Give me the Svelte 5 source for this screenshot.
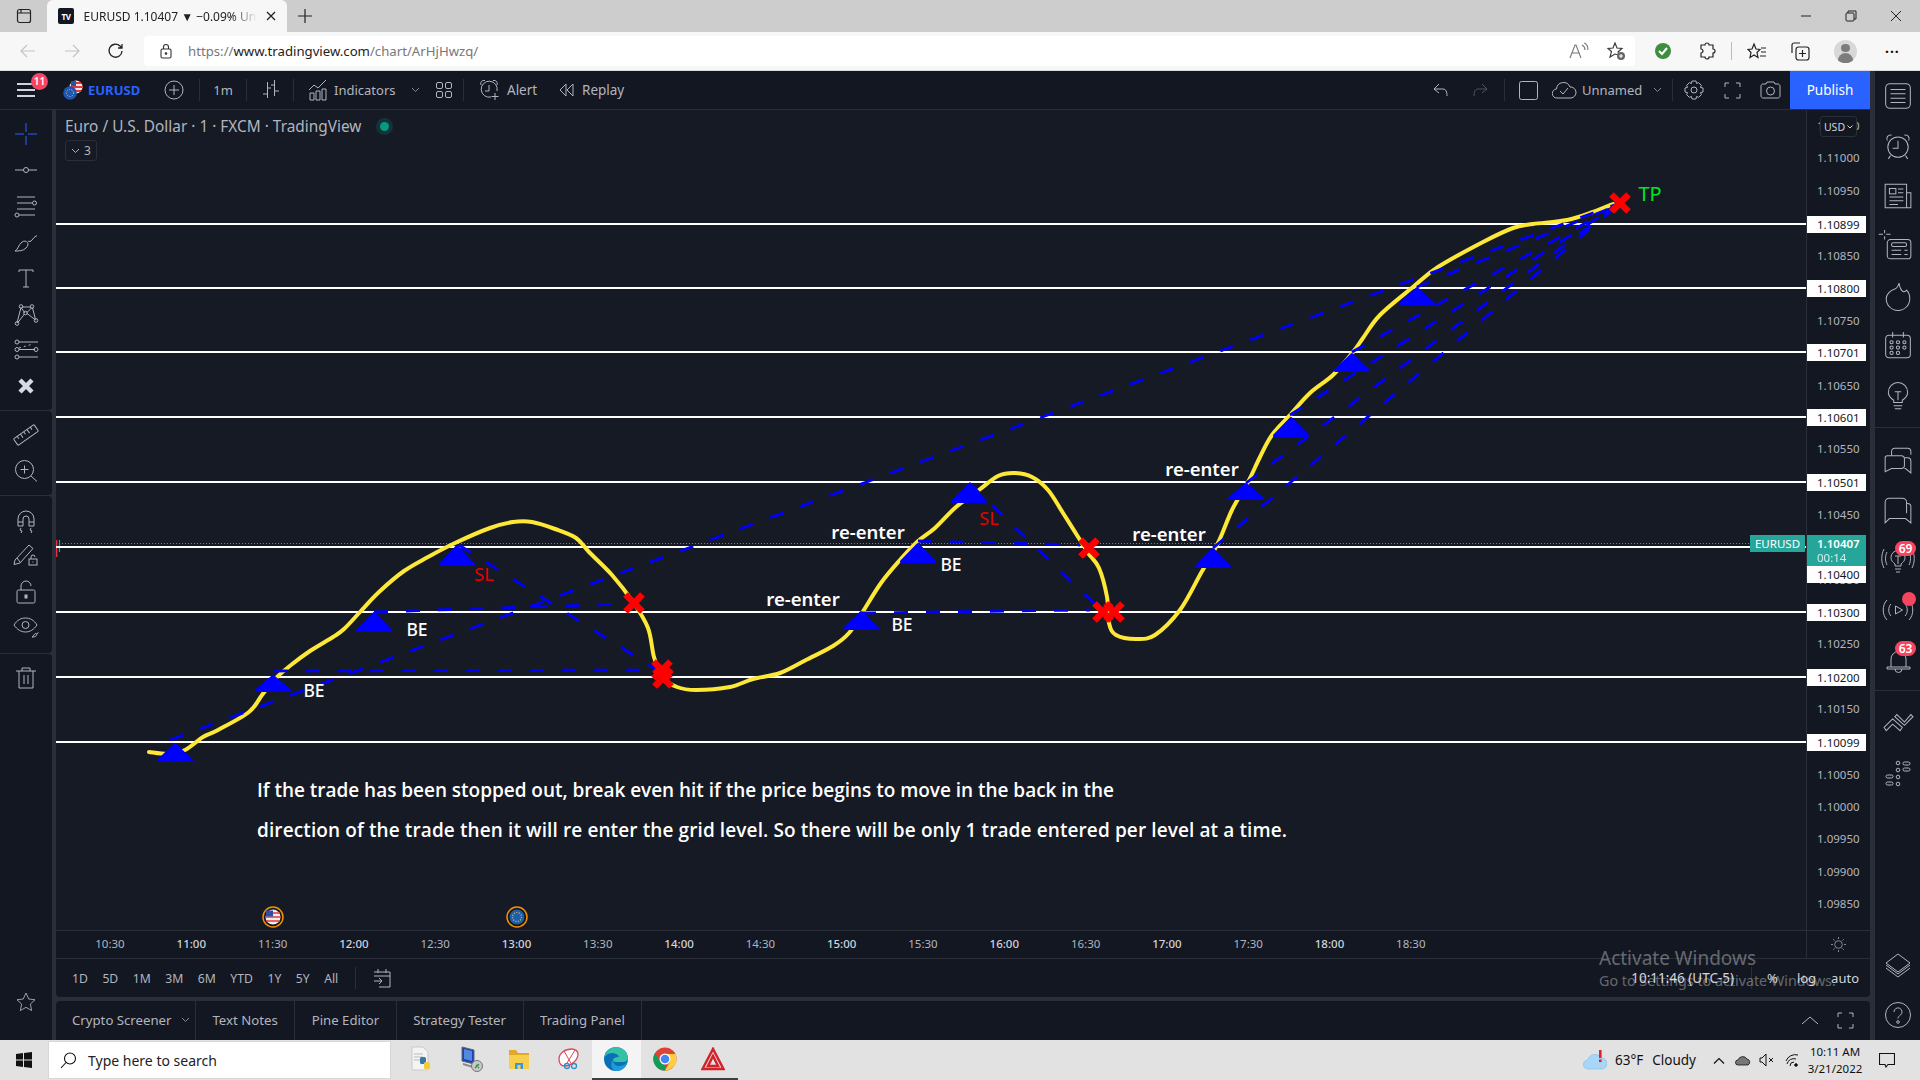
<script>
  const grid = [224, 288, 352, 417, 482, 547, 612, 677, 742];
  const yellow = [[149,752],[168,754],[185,750],[203,737],[218,730],[249,712],[262,695],[274,680],[291,665],[310,651],[333,637],[344,629],[360,612],[379,592],[404,571],[428,557],[455,543],[490,528],[513,522],[532,522],[555,529],[576,538],[589,552],[612,575],[633,602],[648,628],[654,657],[662,677],[677,687],[696,690],[730,687],[753,679],[780,673],[806,660],[833,646],[849,633],[862,613],[881,583],[900,560],[917,542],[935,528],[956,507],[979,490],[998,476],[1015,473],[1032,477],[1048,490],[1063,513],[1080,540],[1088,553],[1099,568],[1107,597],[1109,623],[1116,635],[1136,639],[1155,635],[1180,610],[1201,573],[1218,543],[1232,510],[1248,482],[1260,457],[1272,435],[1290,415],[1310,393],[1333,375],[1353,352],[1363,338],[1380,315],[1413,287],[1438,267],[1483,242],[1513,228],[1533,224],[1567,220],[1593,212],[1613,204]];
  function smooth(p) {
    let d = `M${p[0][0]} ${p[0][1]}`;
    for (let i = 0; i < p.length - 1; i++) {
      const a = p[Math.max(i - 1, 0)], b = p[i], c = p[i + 1], e = p[Math.min(i + 2, p.length - 1)];
      const c1 = [b[0] + (c[0] - a[0]) / 6, b[1] + (c[1] - a[1]) / 6];
      const c2 = [c[0] - (e[0] - b[0]) / 6, c[1] - (e[1] - b[1]) / 6];
      d += `C${c1[0].toFixed(1)} ${c1[1].toFixed(1)} ${c2[0].toFixed(1)} ${c2[1].toFixed(1)} ${c[0]} ${c[1]}`;
    }
    return d;
  }
  const yellowPath = smooth(yellow);
  const dashes = [
    [170,740,1620,203],[274,671,654,670],[374,612,624,604],[459,545,660,672],
    [862,613,1090,610],[918,541,1080,545],[969,483,1103,612],
    [1213,548,1618,205],[1246,483,1618,205],[1290,415,1618,205],[1352,352,1618,205],[1417,287,1618,205]
  ];
  const triangles = [[175,743,762],[273,675,692],[374,612,632],[457,545,566],[861,611,630],[918,543,563],[969,483,503],[1213,548,568],[1246,483,500],[1291,417,437],[1352,353,372],[1417,287,305]];
  const crosses = [[634,603],[662,670],[663,678],[1089,548],[1103,612],[1114,612],[1620,203]];
  const notes = [
    ['BE',417,636,'be'],['BE',314,697,'be'],['BE',951,571,'be'],['BE',902,631,'be'],
    ['SL',484,581,'sl'],['SL',989,525,'sl'],['TP',1650,201,'tp'],
    ['re-enter',868,539,'re'],['re-enter',803,606,'re'],['re-enter',1169,541,'re'],['re-enter',1202,476,'re']
  ];
  const ticks = [['1.11050',126],['1.11000',158],['1.10950',191],['1.10850',256],['1.10750',321],['1.10650',386],['1.10550',449],['1.10450',515],['1.10350',580],['1.10250',644],['1.10150',709],['1.10050',775],['1.10000',807],['1.09950',839],['1.09900',872],['1.09850',904]];
  const levels = [['1.10899',224],['1.10800',288],['1.10701',352],['1.10601',417],['1.10501',482],['1.10400',574],['1.10300',612],['1.10200',677],['1.10099',742]];
  const times = ['10:30','11:00','11:30','12:00','12:30','13:00','13:30','14:00','14:30','15:00','15:30','16:00','16:30','17:00','17:30','18:00','18:30'];
  const ranges = ['1D','5D','1M','3M','6M','YTD','1Y','5Y','All'];

  const left1 = {
    cross:'<path stroke="#2962ff" d="M14 3v9M14 16v9M3 14h9M16 14h9"/>',
    line:'<path d="M3 14h8.500M16.500 14h8.500"/><circle cx="14" cy="14" r="2.500"/>',
    fib:'<path d="M5 5h18M5 11h15M5 17h18M7 23h16"/><circle cx="22.500" cy="11" r="2"/><circle cx="5" cy="23" r="2"/>',
    brush:'<path d="M3 23c3-1 3-6 7-9 2-1.500 4.500-1 5.500.5 1 1.500.5 3.500-1.500 5.500-3 3-7 3-11 3z"/><path d="M16 13c1 1 3 .5 4-1l2-2.500 3-2"/>',
    text:'<path d="M7 8V6h14v2M14 6v17M11 23h6"/>',
    pattern:'<path d="M5 23L9 7.500M10 7h9M5.500 23l7-9M9 7.500l4 5.500M14.500 13l9 7M15 12.500l5-5M20.500 8l3 11.500"/><circle cx="9" cy="6.500" r="1.800"/><circle cx="20" cy="6.500" r="1.800"/><circle cx="13.500" cy="13" r="1.800"/><circle cx="24" cy="20.500" r="1.800"/><circle cx="5" cy="23.500" r="1.800"/>',
    pred:'<path d="M7 6h19M7 21h19M7 13.500h16" /><path stroke-dasharray="2 3" d="M7 12l14-4"/><circle cx="5" cy="6" r="2"/><circle cx="5" cy="13.500" r="2"/><circle cx="5" cy="21" r="2"/><circle cx="24" cy="13.500" r="2"/>',
    x:'<path stroke="#d7dae2" stroke-width="4.500" d="M8 8l12 12M20 8L8 20"/>',
    ruler:'<g transform="rotate(-35 14 14)"><rect x="1.500" y="10" width="25" height="8" rx="1"/><path d="M6 10v3M10 10v4.500M14 10v3M18 10v4.500M22 10v3"/></g>',
    zoom:'<circle cx="12.500" cy="12.500" r="9"/><path d="M12.500 8.500v8M8.500 12.500h8M19 19l6 5.500"/>',
    magnet:'<path d="M6 19V12a8 8 0 0 1 16 0v7h-5v-7a3 3 0 0 0-6 0v7zM6 15h5M17 15h5M9 21l-1 2 2 1-1 2M19 21l-1 2 2 1-1 2"/>',
    pencil:'<path d="M3 20L17 5l4 3.500L8 23l-6 1.500z"/><path d="M5 18l3 4"/><rect x="17" y="19" width="8" height="6"/><path d="M19 19v-2a2 2 0 0 1 4 0"/><path d="M21 21.500v1"/>',
    lock:'<rect x="5" y="12" width="18" height="13" rx="1.500"/><path d="M9 12V8a5 5 0 0 1 10 0"/><rect x="13" y="17" width="2" height="3" fill="#b2b5be"/>',
    eye:'<path d="M2 11C5 6 9 4 13.500 4S22 6 25 11c-3 4.500-7 7-11.500 7S5 15.500 2 11z"/><circle cx="13.500" cy="11" r="3.500"/><path d="M20 23c2-1 2-3 3.500-3.500s1.500 1.500.5 2.500-2.500 1-4 1zM24.500 20l2-1.500"/>',
    trash:'<path d="M4 8h20M10 8V5h8v3M7 8v17h14V8M12 12v9M16 12v9"/>',
    star:'<path d="M14 3.500l3.200 7 7.300.9-5.400 5 1.500 7.600-6.600-3.800-6.600 3.800 1.500-7.600-5.400-5 7.300-.9z"/>'
  };
  const right = {
    list:'<rect x="2.500" y="2.500" width="23" height="23" rx="4"/><path d="M7 8h14M7 12h14M7 16h14M7 20h14"/>',
    alarm:'<circle cx="14" cy="15" r="9.500"/><path d="M14 9v7H9M4 9c-1.500-3 1-6 4-5M24 9c1.500-3-1-6-4-5M7 23l-2 3M21 23l2 3"/>',
    news:'<path d="M2 3h20v22H2zM22 11h4v14h-4"/><rect x="6" y="7" width="6" height="5"/><path d="M14 7.500h5M14 11h5M6 15h13M6 18.500h13M6 22h8"/>',
    watch:'<rect x="4" y="8" width="22" height="18" rx="3"/><rect x="8" y="11" width="14" height="3.500" rx="1.500"/><path d="M8 18h9M20 18h3M8 22h9M20 22h3M-4 3h4M3 3h4M1.500 -1v3M1.500 5v3"/>',
    flame:'<path d="M15 2c-1 3-2 5-4 5.500C6 9 3 13 3 16.500a11 11 0 0 0 22 0c0-3-1-6-3-8-1 1-2 2-3 1.500-2-1-3.500-4-4-8z"/>',
    cal:'<rect x="2.500" y="4" width="23" height="21" rx="3"/><path d="M9 1v5M19 1v5"/><circle cx="8" cy="10.500" r="1.500"/><circle cx="14" cy="10.500" r="1.500"/><circle cx="20" cy="10.500" r="1.500"/><circle cx="8" cy="15.500" r="1.500"/><circle cx="14" cy="15.500" r="1.500"/><circle cx="20" cy="15.500" r="1.500"/><circle cx="8" cy="20.500" r="1.500"/><circle cx="14" cy="20.500" r="1.500"/>',
    bulb:'<path d="M10 20v-2c-3-2-5-4-5-7.500a9 9 0 0 1 18 0c0 3.500-2 5.500-5 7.500v2zM10 23h8M11 26h6M11 10h6M14 10v8"/>',
    chats:'<path d="M4 10h13a3 3 0 0 1 3 3v6a3 3 0 0 1-3 3H8l-6 3V12a2 2 0 0 1 2-2z"/><path d="M8 10V6a3 3 0 0 1 3-3h12a3 3 0 0 1 3 3v3M20 12h3a3 3 0 0 1 3 3v11l-5-4h-1"/>',
    chat:'<path d="M6 3h12a4 4 0 0 1 4 4v1h1a3 3 0 0 1 3 3v15l-5-4H6L2 26V7a4 4 0 0 1 4-4zM22 8v9"/>',
    bulbw:'<path d="M11 20v-2c-2-2-4-3-4-6.500a7 7 0 0 1 14 0c0 3.500-2 4.500-4 6.500v2zM11 23h6M12 26h4M11 10h6M14 10v8M3 6c-2 4-2 9 0 13M0 3c-3 6-3 13 0 19M25 6c2 4 2 9 0 13M28 3c3 6 3 13 0 19"/>',
    play:'<path d="M11.500 10v8l7-4zM7 8c-3 3-3 9 0 12M21 8c3 3 3 9 0 12M3 4c-5 5-5 15 0 20M25 4c5 5 5 15 0 20"/>',
    bell:'<path d="M7 21v-8a7.500 7.500 0 0 1 15 0v8M3 21h23v2H3zM11 23a3 3 0 0 0 7 0"/>',
    vee:'<path d="M1 20L9 12l9 8-2 3-7-6-6 6zM13 8l7 7 6-7 2 2-8 8-9-8z"/>',
    dots:'<rect x="19" y="3" width="7" height="3" rx="1.500"/><rect x="19" y="9" width="7" height="3" rx="1.500"/><circle cx="14" cy="4" r="1.800"/><circle cx="14" cy="11" r="1.800"/><circle cx="14" cy="18" r="1.800"/><circle cx="14" cy="25" r="1.800"/><rect x="2" y="16" width="7" height="3" rx="1.500"/><rect x="2" y="23" width="7" height="3" rx="1.500"/>',
    layers:'<path d="M14 3l12 9-12 9-12-9zM2 17l12 9 12-9M2 14l12 9 12-9"/>',
    help:'<circle cx="14" cy="14" r="12.500"/><path d="M10 11a4 4 0 1 1 6.500 3c-1.500 1-2.500 2-2.500 3.500"/><circle cx="14" cy="21" r="1.300"/>'
  };
  const toolsA = ['cross','line','fib','brush','text','pattern','pred','x'];
  const toolsB = ['ruler','zoom'];
  const toolsC = ['magnet','pencil','lock','eye'];
  const railA = ['list','alarm','news','watch','flame','cal','bulb'];
</script>

<div class="app">
  <div class="tabstrip">
    <svg class="strip-ic" width="16" height="16" viewBox="0 0 16 16" fill="none" stroke="#222" stroke-width="1.200"><rect x="1.500" y="1.500" width="13" height="13" rx="2"/><path d="M1.500 5h13M5 1.500V5" /></svg>
    <div class="tab">
      <div class="favicon">TV</div>
      <div class="tabtitle">EURUSD 1.10407 ▼ −0.09% Unnamed</div>
      <svg width="10" height="10" viewBox="0 0 10 10" stroke="#222" stroke-width="1.300"><path d="M1 1l8 8M9 1l-8 8"/></svg>
    </div>
    <svg class="newtab" width="14" height="14" viewBox="0 0 14 14" stroke="#222" stroke-width="1.200"><path d="M7 0v14M0 7h14"/></svg>
    <div class="winctl">
      <svg width="12" height="12" viewBox="0 0 12 12" stroke="#222"><path d="M1 6h10"/></svg>
      <svg width="12" height="12" viewBox="0 0 12 12" stroke="#222" fill="none"><rect x="1" y="3" width="8" height="8" rx="1"/><path d="M3 3V1h8v8H9"/></svg>
      <svg width="12" height="12" viewBox="0 0 12 12" stroke="#222"><path d="M1 1l10 10M11 1L1 11"/></svg>
    </div>
  </div>

  <div class="addressbar">
    <div class="navs">
      <svg width="18" height="18" viewBox="0 0 18 18" fill="none" stroke="#c4c4c4" stroke-width="1.200"><path d="M16 9H2M8 3L2 9l6 6"/></svg>
      <svg width="18" height="18" viewBox="0 0 18 18" fill="none" stroke="#c4c4c4" stroke-width="1.200"><path d="M2 9h14M10 3l6 6-6 6"/></svg>
      <svg width="18" height="18" viewBox="0 0 18 18" fill="none" stroke="#222" stroke-width="1.300"><path d="M15 9a6.500 6.500 0 1 1-2-5l2 2M15 2v4h-4"/></svg>
    </div>
    <div class="urlbox">
      <svg width="14" height="16" viewBox="0 0 14 16" fill="none" stroke="#333" stroke-width="1.100"><rect x="2" y="6" width="10" height="9" rx="1.500"/><path d="M4.500 6V4a2.500 2.500 0 0 1 5 0v2"/><circle cx="7" cy="10.500" r=".8" fill="#333"/></svg>
      <div class="url"><span class="dim">https://</span>www.tradingview.com<span class="dim">/chart/ArHjHwzq/</span></div>
      <div class="urlend">
        <svg width="20" height="18" viewBox="0 0 20 18" fill="none" stroke="#777" stroke-width="1.100"><path d="M1 16L6 3h1l5 13M3 11h7M13 3c2 1 3 3 3 5M15 1c3 1 4 4 4 7"/></svg>
        <svg width="20" height="20" viewBox="0 0 20 20" fill="none" stroke="#333" stroke-width="1.100"><path d="M9 2l2 5 5 .5-4 3.500 1 3-4-1-5 3 1.500-5.500L2 7.500 7 7z"/><circle cx="15" cy="15" r="4" fill="#666" stroke="none"/><path d="M15 13v4M13 15h4" stroke="#fff"/></svg>
      </div>
    </div>
    <div class="browser-ext">
      <svg width="18" height="18" viewBox="0 0 18 18"><circle cx="9" cy="9" r="8" fill="#3e8e41"/><path d="M5 9l3 3 5-6" fill="none" stroke="#fff" stroke-width="2"/></svg>
      <svg class="puzzle" width="18" height="18" viewBox="0 0 18 18" fill="none" stroke="#222" stroke-width="1.200"><path d="M7 3a2 2 0 0 1 4 0h4v4a2 2 0 0 1 0 4v4h-4a2 2 0 0 1-4 0H3v-4a2 2 0 0 0 0-4V3z"/></svg>
      <div class="extsep"></div>
      <svg class="favs" width="20" height="18" viewBox="0 0 20 18" fill="none" stroke="#222" stroke-width="1.200"><path d="M7 2l2 5 4 .5-3 3 1 5-4-2.500L3 15.500l1-5-3-3L5 7zM14 6h5M14 10h5M13 14h6"/></svg>
      <svg class="coll" width="20" height="20" viewBox="0 0 20 20" fill="none" stroke="#222" stroke-width="1.200"><path d="M2 12V4c0-1 1-2 2-2h6"/><rect x="6" y="6" width="13" height="13" rx="2.500"/><path d="M12.500 9v7M9 12.500h7"/></svg>
      <div class="avatar"><div class="head"></div><div class="torso"></div></div>
      <div class="ell">···</div>
    </div>
  </div>

  <div class="body">
    <div class="workspace">
      <header class="tvhead">
        <div class="menu">
          <svg width="18" height="14" viewBox="0 0 18 14" stroke="#d1d4dc" stroke-width="2"><path d="M0 1h18M0 7h18M0 13h18"/></svg>
          <span class="bdg menu-bdg">11</span>
        </div>
        <div class="symbol">
          <svg width="20" height="22" viewBox="0 0 20 22">
            <circle cx="13" cy="8" r="6.500" fill="#e8e8ee"/><path d="M8 3h10v2H8zM7 7h13v2H7zM8 11h10v2H8z" fill="#e53935"/><rect x="8" y="2" width="5" height="5" fill="#1e56b0"/>
            <circle cx="7" cy="14" r="6.800" fill="#1e56b0"/><circle cx="7" cy="14" r="3.500" fill="none" stroke="#f7d038" stroke-dasharray="1 1.500"/>
          </svg>
          <span>EURUSD</span>
        </div>
        <div class="tool t-plus"><svg width="20" height="20" viewBox="0 0 20 20" fill="none" stroke="#b2b5be"><circle cx="10" cy="10" r="9"/><path d="M10 5v10M5 10h10"/></svg></div>
        <div class="sep"></div>
        <div class="tool t-1m">1m</div>
        <div class="sep"></div>
        <div class="tool t-candle"><svg width="18" height="22" viewBox="0 0 18 22" fill="none" stroke="#b2b5be"><path d="M5.500 3v16M1 15h4.500M5.500 9H9M12.500 1v16M9 6h3.500M12.500 12H17"/></svg></div>
        <div class="sep"></div>
        <div class="tool t-ind">
          <svg width="20" height="22" viewBox="0 0 20 22" fill="none" stroke="#b2b5be"><path d="M1 11l5-5 4 3 8-8M2 14h4v7H2zM8 12h4v9H8zM14 10h4v11h-4z"/></svg>
          <span>Indicators</span>
          <svg class="chev" width="9" height="6" viewBox="0 0 9 6" fill="none" stroke="#868993"><path d="M1 1l3.500 3.500L8 1"/></svg>
        </div>
        <div class="tool t-grid"><svg width="16" height="16" viewBox="0 0 16 16" fill="none" stroke="#b2b5be"><rect x=".5" y=".5" width="6" height="6" rx="1.500"/><rect x="9.500" y=".5" width="6" height="6" rx="1.500"/><rect x=".5" y="9.500" width="6" height="6" rx="1.500"/><rect x="9.500" y="9.500" width="6" height="6" rx="1.500"/></svg></div>
        <div class="sep"></div>
        <div class="tool t-alert">
          <svg width="20" height="22" viewBox="0 0 20 22" fill="none" stroke="#b2b5be"><path d="M11 18a8 8 0 1 1 6-6M9 6v6H5M1 6c-1-3 1-5 4-4.500M13 1.500c3-.5 5 1.500 4 4.500M15 14v7M11.500 17.500h7"/></svg>
          <span>Alert</span>
        </div>
        <div class="tool t-replay">
          <svg width="16" height="14" viewBox="0 0 16 14" fill="none" stroke="#b2b5be"><path d="M7 1L1 7l6 6zM14 1L8 7l6 6z"/></svg>
          <span>Replay</span>
        </div>
        <div class="headright">
          <div class="tool t-40"><svg width="16" height="14" viewBox="0 0 16 14" fill="none" stroke="#b2b5be"><path d="M6 1L1 6l5 4M1 6h9c3 0 4 3 4 7"/></svg></div>
          <div class="tool t-40 t-redo"><svg width="16" height="14" viewBox="0 0 16 14" fill="none" stroke="#50535e"><path d="M10 1l5 5-5 4M15 6H6C3 6 2 9 2 13"/></svg></div>
          <div class="sep"></div>
          <div class="tool t-sq"><svg width="19" height="19" viewBox="0 0 19 19" fill="none" stroke="#b2b5be"><rect x=".5" y=".5" width="18" height="18" rx="2"/></svg></div>
          <div class="tool t-unnamed">
            <svg width="25" height="18" viewBox="0 0 25 18" fill="none" stroke="#b2b5be"><path d="M6 17H5a4.500 4.500 0 0 1-.5-9A7 7 0 0 1 18 6a5.500 5.500 0 0 1 1 11zM8 10l3 3 5-6"/></svg>
            <span>Unnamed</span>
            <svg class="chev" width="9" height="6" viewBox="0 0 9 6" fill="none" stroke="#868993"><path d="M1 1l3.500 3.500L8 1"/></svg>
          </div>
          <div class="sep"></div>
          <div class="tool t-gear"><svg width="20" height="20" viewBox="0 0 20 20" fill="none" stroke="#b2b5be"><path d="M8 1h4l.6 2.500 2-.9 2.800 2.800-1 2 2.600.6v4l-2.600.6 1 2-2.800 2.800-2-1L12 19H8l-.6-2.600-2 1-2.800-2.800 1-2L1 12V8l2.600-.6-1-2 2.800-2.800 2 .9z"/><circle cx="10" cy="10" r="3"/></svg></div>
          <div class="tool t-full"><svg width="17" height="17" viewBox="0 0 17 17" fill="none" stroke="#b2b5be"><path d="M1 5V1h4M12 1h4v4M16 12v4h-4M5 16H1v-4"/></svg></div>
          <div class="tool t-40"><svg width="21" height="18" viewBox="0 0 21 18" fill="none" stroke="#b2b5be"><path d="M1 5c0-1 1-2 2-2h3l1-2h7l1 2h3c1 0 2 1 2 2v10c0 1-1 2-2 2H3c-1 0-2-1-2-2z"/><circle cx="10.500" cy="10" r="4"/></svg></div>
          <button class="publish">Publish</button>
        </div>
      </header>

      <div class="lower">
        <nav class="lefttools">
          <div class="group">
            {#each toolsA as k}<div class="lt"><svg width="28" height="28" viewBox="0 0 28 28" fill="none" stroke="#b2b5be" stroke-width="1">{@html left1[k]}</svg></div>{/each}
          </div>
          <div class="group">
            {#each toolsB as k}<div class="lt"><svg width="28" height="28" viewBox="0 0 28 28" fill="none" stroke="#b2b5be" stroke-width="1">{@html left1[k]}</svg></div>{/each}
          </div>
          <div class="group">
            {#each toolsC as k}<div class="lt" class:raised={k === 'pencil'}><svg width="28" height="28" viewBox="0 0 28 28" fill="none" stroke="#b2b5be" stroke-width="1">{@html left1[k]}</svg></div>{/each}
          </div>
          <div class="group last">
            <div class="lt"><svg width="28" height="28" viewBox="0 0 28 28" fill="none" stroke="#b2b5be" stroke-width="1">{@html left1.trash}</svg></div>
          </div>
          <div class="lt star"><svg width="24" height="24" viewBox="0 0 28 28" fill="none" stroke="#b2b5be" stroke-width="1">{@html left1.star}</svg></div>
        </nav>

        <div class="center">
          <section class="chartcard">
            <div class="plotrow">
              <div class="plot">
                <svg class="chartsvg" width="1750" height="820" viewBox="56 110 1750 820">
                  <path d="M56 543.500H1751" stroke="#26a69a" stroke-dasharray="1 2" fill="none"/>
                  <path d="M56.700 540v17" stroke="#f23645" stroke-width="1.200"/>
                  <path d="M59.500 540v12" stroke="#26a69a" stroke-width="1.200"/>
                  {#each grid as y}<line x1="56" x2="1806" y1={y} y2={y} stroke="#fff" stroke-width="2"/>{/each}
                  <path d={yellowPath} fill="none" stroke="#fde838" stroke-width="4" stroke-linecap="round"/>
                  {#each dashes as d}<line x1={d[0]} y1={d[1]} x2={d[2]} y2={d[3]} stroke="#0000ff" stroke-width="2.800" stroke-dasharray="14 18"/>{/each}
                  {#each triangles as t}<polygon points="{t[0]},{t[1]+1.5} {t[0]+16.500},{t[2]-1.500} {t[0]-16.500},{t[2]-1.500}" fill="#0000ff" stroke="#0000ff" stroke-width="3" stroke-linejoin="round"/>{/each}
                  {#each crosses as c}<path d="M{c[0]-8.500} {c[1]-8.500}L{c[0]+8.500} {c[1]+8.500}M{c[0]+8.500} {c[1]-8.500}L{c[0]-8.500} {c[1]+8.500}" stroke="#ff0000" stroke-width="6.500"/>{/each}
                  {#each notes as n}<text x={n[1]} y={n[2]} text-anchor="middle" class="note {n[3]}">{n[0]}</text>{/each}
                  <text x="257" y="797" class="para" textLength="857">If the trade has been stopped out, break even hit if the price begins to move in the back in the</text>
                  <text x="257" y="837" class="para" textLength="1030">direction of the trade then it will re enter the grid level. So there will be only 1 trade entered per level at a time.</text>
                  <g>
                    <circle cx="273" cy="917" r="10" fill="#131722" stroke="#f59000" stroke-width="1.500"/>
                    <circle cx="273" cy="917" r="7.500" fill="#eee"/>
                    <path d="M266 913h14M265.500 917h15M266 921h14" stroke="#e53935" stroke-width="1.700"/>
                    <path d="M266 910.500h7v6h-7z" fill="#2b4fa8"/>
                    <circle cx="517" cy="917" r="10" fill="#131722" stroke="#f59000" stroke-width="1.500"/>
                    <circle cx="517" cy="917" r="7.500" fill="#1f5fa8"/>
                    <circle cx="517" cy="917" r="4.500" fill="none" stroke="#e0c53a" stroke-width="1.200" stroke-dasharray="1 1.500"/>
                  </g>
                </svg>
                <div class="legend">
                  <div class="legendline">
                    <span>Euro / U.S. Dollar · 1 · FXCM · TradingView</span>
                    <span class="livedot"></span>
                  </div>
                  <div class="collapse"><svg width="9" height="6" viewBox="0 0 9 6" fill="none" stroke="#b2b5be"><path d="M1 1l3.500 3.500L8 1"/></svg><span>3</span></div>
                </div>
                <div class="symtag">EURUSD</div>
              </div>
              <div class="axis">
                {#each ticks as t}<div class="tick" style="top:{t[1] - 110}px">{t[0]}</div>{/each}
                {#each levels as l}<div class="lvl" style="top:{l[1] - 110}px">{l[0]}</div>{/each}
                <div class="current"><b>1.10407</b><span>00:14</span></div>
                <div class="usd">USD<svg width="6" height="4" viewBox="0 0 6 4" fill="none" stroke="#d1d4dc"><path d="M.5.5L3 3 5.500.5"/></svg></div>
              </div>
            </div>
            <div class="timerow">
              <div class="timescale">
                {#each times as t, i}<span class="time" class:hour={t.endsWith(':00')} style="left:{54 + i * 81.3}px">{t}</span>{/each}
              </div>
              <div class="corner"><svg width="15" height="15" viewBox="0 0 15 15" fill="none" stroke="#868993"><circle cx="7.500" cy="7.500" r="3.800"/><path d="M7.500 0v2M7.500 13v2M0 7.500h2M13 7.500h2M2.200 2.200l1.400 1.400M11.400 11.400l1.400 1.400M12.800 2.200l-1.400 1.400M3.600 11.400l-1.400 1.400"/></svg></div>
            </div>
            <div class="rangebar">
              <div class="ranges">{#each ranges as r}<span>{r}</span>{/each}</div>
              <div class="sep s-r"></div>
              <svg class="calgo" width="18" height="20" viewBox="0 0 18 20" fill="none" stroke="#b2b5be"><path d="M1 4h16v15H6M1 8h16M5 1v4M13 1v4M1 13h8M6 10l3 3-3 3"/></svg>
              <div class="rangeright">
                <span class="clock">10:11:46 (UTC-5)</span>
                <div class="sep"></div>
                <span class="opt pct">%</span><span class="opt lg">log</span><span class="opt">auto</span>
              </div>
            </div>
          </section>
          <section class="panel">
            <div class="ptab crypto">Crypto Screener<svg width="9" height="6" viewBox="0 0 9 6" fill="none" stroke="#868993"><path d="M1 1l3.500 3.500L8 1"/></svg></div>
            <div class="ptab">Text Notes</div>
            <div class="ptab">Pine Editor</div>
            <div class="ptab">Strategy Tester</div>
            <div class="ptab">Trading Panel</div>
            <div class="panelright">
              <svg width="18" height="9" viewBox="0 0 18 9" fill="none" stroke="#b2b5be"><path d="M1 8l8-7 8 7"/></svg>
              <svg width="17" height="17" viewBox="0 0 17 17" fill="none" stroke="#b2b5be"><path d="M1 5V1h4M12 1h4v4M16 12v4h-4M5 16H1v-4"/></svg>
            </div>
          </section>
        </div>
      </div>
    </div>

    <aside class="rail">
      <div class="railgroup rg-a">
        {#each railA as k}<div class="rt"><svg width="30" height="30" viewBox="0 0 28 28" fill="none" stroke="#b2b5be" stroke-width=".95">{@html right[k]}</svg></div>{/each}
      </div>
      <div class="railgroup rg-b">
        <div class="rt"><svg width="30" height="30" viewBox="0 0 28 28" fill="none" stroke="#b2b5be" stroke-width=".95">{@html right.chats}</svg></div>
        <div class="rt"><svg width="30" height="30" viewBox="0 0 28 28" fill="none" stroke="#b2b5be" stroke-width=".95">{@html right.chat}</svg></div>
        <div class="rt"><svg width="28" height="28" viewBox="0 0 28 28" fill="none" stroke="#b2b5be" stroke-width="1">{@html right.bulbw}</svg><span class="bdg b-r">69</span></div>
        <div class="rt"><svg width="28" height="28" viewBox="0 0 28 28" fill="none" stroke="#b2b5be" stroke-width="1">{@html right.play}</svg><span class="dot"></span></div>
        <div class="rt"><svg width="28" height="28" viewBox="0 0 28 28" fill="none" stroke="#b2b5be" stroke-width="1">{@html right.bell}</svg><span class="bdg b-r">63</span></div>
      </div>
      <div class="railgroup rg-c">
        <div class="rt rt-s"><svg width="30" height="30" viewBox="0 0 28 28" fill="none" stroke="#b2b5be" stroke-width=".95">{@html right.vee}</svg></div>
        <div class="rt rt-s"><svg width="28" height="28" viewBox="0 0 28 28" fill="none" stroke="#b2b5be" stroke-width="1">{@html right.dots}</svg></div>
      </div>
      <div class="railbottom">
        <div class="rt"><svg width="28" height="28" viewBox="0 0 28 28" fill="none" stroke="#b2b5be" stroke-width="1">{@html right.layers}</svg></div>
        <div class="rt"><svg width="28" height="28" viewBox="0 0 28 28" fill="none" stroke="#b2b5be" stroke-width="1">{@html right.help}</svg></div>
      </div>
    </aside>
  </div>

  <footer class="taskbar">
    <svg class="winlogo" width="16" height="16" viewBox="0 0 16 16" fill="#111"><path d="M0 2l7-1v6.500H0zM8 1l8-1v7.500H8zM0 8.500h7V15l-7-1zM8 8.500h8V16l-8-1z"/></svg>
    <div class="search">
      <svg width="17" height="17" viewBox="0 0 17 17" fill="none" stroke="#111" stroke-width="1.100"><circle cx="10" cy="6.500" r="5.500"/><path d="M6 10.500L1 16"/></svg>
      <span>Type here to search</span>
    </div>
    <div class="tasks">
      <div class="task"><svg width="24" height="26" viewBox="0 0 24 26"><path d="M2 1h11l5 5v18H2z" fill="#f4f4f4" stroke="#c9c9c9"/><path d="M4 8h9M4 11h9M4 14h6" stroke="#bbb"/><rect x="10" y="11" width="6" height="7" rx="1.500" fill="#3776ab"/><rect x="14" y="16" width="6" height="7" rx="1.500" fill="#f5cc36"/></svg></div>
      <div class="task"><svg width="26" height="28" viewBox="0 0 26 28"><path d="M4 2l12 3v14L4 16z" fill="#1f3fb8" stroke="#666"/><path d="M6 4l8 2v10l-8-2z" fill="#4f8ae0"/><path d="M5 18l10 3v2L5 20z" fill="#888"/><circle cx="19" cy="21" r="5.500" fill="#c8c8c8" stroke="#777"/><path d="M17 23l4-4M18 20l1 1M20 22l1 1" stroke="#2b8a3e" stroke-width="1.300"/></svg></div>
      <div class="task"><svg width="22" height="22" viewBox="0 0 22 22"><path d="M1 2h7l2 3h11v3H1z" fill="#e2a928"/><rect x="1" y="7" width="20" height="14" fill="#f8cf4d"/><path d="M7 21v-6h8v6" fill="#3a96dd"/><rect x="9.500" y="17" width="3" height="4" fill="#f8cf4d"/></svg></div>
      <div class="task"><svg width="24" height="24" viewBox="0 0 24 24" fill="none"><path d="M3 12C3 6 9 2 16 2c3 0 6 2 6 5 0 6-7 12-13 12-4 0-6-3-6-7z" fill="#fff" stroke="#d94a5b" stroke-width="1.300"/><path d="M8 4l8 14M19 3L11 16" stroke="#d94a5b"/><circle cx="11" cy="19" r="2.500" stroke="#2a8fc9" stroke-width="1.300"/><circle cx="18" cy="19" r="2.500" stroke="#2a8fc9" stroke-width="1.300"/></svg></div>
      <div class="task active"><svg width="26" height="26" viewBox="0 0 26 26"><circle cx="13" cy="13" r="12" fill="#0b6fb8"/><path d="M1 12C3 5 8 1 13 1c6 0 12 5 12 11 0 3-3 4-5 4h-7c-2 0-3-1-3-2 0-2 3-3 6-3-1-3-4-4-7-4-4 0-7 3-8 5z" fill="#35c1a5"/><path d="M10 14c0 4 3 6 6 6 3 0 6-1 8-4-1 5-5 9-10 9-2 0-4-1-5-3-1-3-1-6 1-8z" fill="#1e9cd7"/></svg></div>
      <div class="task"><svg width="24" height="24" viewBox="0 0 24 24"><circle cx="12" cy="12" r="11.500" fill="#db4437"/><path d="M12 23.500A11.500 11.500 0 0 1 2 6l6 10 4 2z" fill="#0f9d58"/><path d="M12 7h10.400A11.500 11.500 0 0 1 12 23.500l5-9z" fill="#ffcd40"/><circle cx="12" cy="12" r="5.500" fill="#fff"/><circle cx="12" cy="12" r="4.300" fill="#4285f4"/></svg></div>
      <div class="task"><svg width="24" height="24" viewBox="0 0 24 24" fill="none" stroke="#d3222a" stroke-width="2.500"><path d="M12 2L1.500 22h21zM12 9l-5 10h10z"/></svg></div>
    </div>
    <div class="tray">
      <svg class="weather" width="24" height="22" viewBox="0 0 24 22"><path d="M5 20a4.500 4.500 0 0 1 0-9 7 7 0 0 1 13-2 5.500 5.500 0 0 1 1 11z" fill="#a9d6f7" stroke="#7bbcec" stroke-width=".6"/><rect x="16" y="1" width="2.600" height="8" fill="#e0202c"/><rect x="16" y="10.500" width="2.600" height="2.600" fill="#e0202c"/></svg>
      <span class="temp">63°F</span><span class="cond">Cloudy</span>
      <svg class="caret" width="12" height="7" viewBox="0 0 12 7" fill="none" stroke="#111" stroke-width="1.200"><path d="M1 6.500l5-5 5 5"/></svg>
      <svg class="odrive" width="16" height="11" viewBox="0 0 16 11" fill="#777" stroke="#111" stroke-width=".8"><path d="M3 10a2.500 2.500 0 0 1 0-5 5 5 0 0 1 9-1 3.200 3.200 0 0 1 1 6z"/></svg>
      <svg class="spk" width="15" height="14" viewBox="0 0 15 14" fill="none" stroke="#111"><path d="M1 5h2l4-4v12l-4-4H1zM10 5l4 4M14 5l-4 4"/></svg>
      <svg class="wifi" width="14" height="14" viewBox="0 0 14 14" fill="none" stroke="#111"><path d="M1 8a10 10 0 0 1 12-6M2 11a7 7 0 0 1 9-5M5 13a4 4 0 0 1 4-4"/><circle cx="11" cy="12" r="1.300" fill="#111"/></svg>
      <div class="datetime"><span>10:11 AM</span><span>3/21/2022</span></div>
      <svg class="notif" width="16" height="15" viewBox="0 0 16 15" fill="none" stroke="#111" stroke-width="1.100"><path d="M.5.500h15v11H9l-2 2.500-1-2.500H.5z"/></svg>
    </div>
  </footer>

  <div class="activate">
    <div class="a1">Activate Windows</div>
    <div class="a2">Go to Settings to activate Windows.</div>
  </div>
</div>

<style>
  :global(body) { margin: 0; background: #131722; }
  :global(*) { box-sizing: border-box; }
  .app { width: 1920px; height: 1080px; display: flex; flex-direction: column; position: relative; overflow: hidden; font-family: "Noto Sans", sans-serif; color: #b2b5be; }

  .tabstrip { height: 32px; background: #cdcdcd; display: flex; align-items: center; flex: none; }
  .strip-ic { margin-left: 16px; }
  .tab { margin-left: 15px; width: 240px; height: 32px; background: #f7f7f7; border-radius: 6px 6px 0 0; display: flex; align-items: center; padding-left: 11px; gap: 9.500px; color: #222; }
  .favicon { width: 16px; height: 16px; background: #131722; border-radius: 2px; color: #fff; font-size: 8px; font-weight: 700; display: flex; align-items: center; justify-content: center; letter-spacing: -.5px; flex: none; }
  .tabtitle { width: 173px; white-space: nowrap; overflow: hidden; font-size: 12px; mask-image: linear-gradient(90deg, #000 85%, transparent); -webkit-mask-image: linear-gradient(90deg, #000 85%, transparent); flex: none; }
  .newtab { margin-left: 11px; }
  .winctl { margin-left: auto; display: flex; gap: 33px; padding-right: 18px; }

  .addressbar { height: 39px; background: #f7f7f7; display: flex; align-items: center; flex: none; border-bottom: 1px solid #dcdcdc; }
  .navs { width: 144px; display: flex; gap: 26px; padding-left: 19px; flex: none; }
  .urlbox { width: 1491px; height: 30px; background: #fff; border-radius: 4px; display: flex; align-items: center; padding-left: 15px; flex: none; }
  .url { margin-left: 15px; font-size: 13.200px; color: #222; }
  .dim { color: #777; }
  .urlend { margin-left: auto; display: flex; gap: 17px; padding-right: 9px; align-items: center; }
  .browser-ext { display: flex; align-items: center; padding-left: 19px; flex: 1; height: 30px; }
  .puzzle { margin-left: 26px; }
  .extsep { width: 1px; height: 18px; background: #bbb; margin-left: 15px; }
  .favs { margin-left: 15px; }
  .coll { margin-left: 23px; }
  .avatar { width: 23px; height: 23px; border-radius: 50%; background: #d8d8d8; margin-left: 24px; overflow: hidden; display: flex; flex-direction: column; align-items: center; padding-top: 4px; flex: none; }
  .head { width: 9px; height: 9px; border-radius: 50%; background: #7c7c7c; }
  .torso { width: 15px; height: 10px; border-radius: 8px 8px 0 0; background: #7c7c7c; margin-top: 1px; }
  .ell { margin-left: 28px; color: #111; font-weight: 700; font-size: 14px; letter-spacing: 1px; }

  .body { flex: 1; display: flex; background: #2a2e39; min-height: 0; }
  .workspace { width: 1870px; display: flex; flex-direction: column; flex: none; }
  .rail { width: 45px; margin-left: 5px; background: #131722; display: flex; flex-direction: column; flex: none; }

  .tvhead { height: 39px; background: #131722; border-bottom: 1px solid #2a2e39; display: flex; align-items: center; flex: none; font-size: 13px; }
  .menu { width: 52px; height: 38px; position: relative; display: flex; align-items: center; justify-content: center; margin-right: 4px; }
  .bdg { background: #f7445f; color: #fff; border-radius: 10px; font-size: 11.500px; font-weight: 600; line-height: 15px; position: absolute; text-align: center; }
  .menu-bdg { width: 17px; height: 17px; border-radius: 50%; line-height: 17px; left: 31px; top: 2px; font-size: 10px; }
  .symbol { width: 101px; height: 38px; display: flex; align-items: center; gap: 5px; padding-left: 7px; color: #2962ff; font-weight: 700; font-size: 13px; }
  .tool { display: flex; align-items: center; height: 38px; flex: none; }
  .t-plus { width: 33px; justify-content: center; margin-right: 9px; }
  .sep { width: 1px; height: 22px; background: #2a2e39; flex: none; }
  .t-1m { width: 46px; justify-content: center; }
  .t-candle { width: 46px; justify-content: center; padding-left: 2px; }
  .t-ind { width: 131px; padding-left: 14px; gap: 6px; }
  .t-ind .chev { margin-left: 10px; }
  .t-grid { width: 38px; justify-content: center; }
  .t-alert { width: 84px; padding-left: 16px; gap: 7px; font-size: 13.500px; }
  .t-replay { gap: 7px; padding-left: 11px; font-size: 13.500px; }
  .headright { margin-left: auto; display: flex; align-items: center; }
  .t-40 { width: 39px; justify-content: center; }
  .t-redo { margin-right: 5px; }
  .t-sq { width: 44px; justify-content: center; padding-left: 2px; }
  .t-unnamed { width: 123px; padding-left: 3px; gap: 5px; }
  .t-unnamed .chev { margin-left: 6px; }
  .t-gear { width: 41px; justify-content: center; }
  .t-full { width: 37px; justify-content: center; }
  .publish { width: 80px; height: 38px; border: 0; background: #2962ff; color: #fff; font: 13.500px "Noto Sans", sans-serif; }

  .lower { flex: 1; display: flex; min-height: 0; }
  .lefttools { width: 52px; margin-right: 4px; display: flex; flex-direction: column; flex: none; gap: 1px; background: #2a2e39; }
  .group { background: #131722; flex: none; border-radius: 0 4px 4px 0; }
  .group:first-child { padding-top: 6px; height: 300px; border-radius: 0 0 4px 0; }
  .group:nth-child(2) { height: 84px; padding-top: 6px; }
  .group:nth-child(3) { height: 157px; padding-top: 7px; }
  .last { flex: 1; padding-top: 5px; border-radius: 0 4px 0 0; }
  .lt { height: 36px; display: flex; align-items: center; justify-content: center; }
  .raised { margin-top: -3px; margin-bottom: 2px; }
  .star { position: absolute; left: 0; width: 52px; top: 984px; }

  .center { flex: 1; display: flex; flex-direction: column; gap: 4px; min-width: 0; }
  .chartcard { height: 887px; background: #131722; border-radius: 0 0 4px 4px; display: flex; flex-direction: column; flex: none; overflow: hidden; }
  .plotrow { height: 820px; display: flex; flex: none; }
  .plot { width: 1750px; background: #161a25; position: relative; flex: none; }
  .chartsvg { display: block; }
  .note { font-family: "Noto Sans", sans-serif; font-size: 17px; fill: #fff; }
  .be { font-size: 17.500px; font-weight: 500; }
  .sl { fill: #e60000; font-size: 18px; }
  .tp { fill: #00e625; font-size: 20px; }
  .re { font-weight: 600; font-size: 18.500px; }
  .para { font-family: "Open Sans", sans-serif; font-weight: 600; font-size: 19px; fill: #fff; }
  .legend { position: absolute; left: 9px; top: 6px; font-size: 15.400px; color: #b2b5be; }
  .legendline { display: flex; align-items: center; gap: 19px; height: 20px; }
  .livedot { width: 9px; height: 9px; border-radius: 50%; background: #089981; box-shadow: 0 0 0 4px rgba(8,153,129,.2); }
  .collapse { margin-top: 4px; width: 32px; height: 21px; border: 1px solid #2a2e39; border-radius: 3px; display: flex; align-items: center; justify-content: center; gap: 4px; font-size: 12px; }
  .symtag { position: absolute; right: 1px; top: 425px; width: 55px; height: 17px; background: #26a69a; color: #fff; font-size: 11.500px; line-height: 17px; text-align: center; }

  .axis { width: 64px; border-left: 1px solid #2a2e39; background: #131722; position: relative; flex: none; font-size: 11.500px; }
  .tick { position: absolute; left: 10px; transform: translateY(-50%); line-height: 14px; }
  .lvl { position: absolute; left: 0; width: 59px; height: 17px; margin-top: -8px; background: #fff; color: #131722; line-height: 17px; padding-left: 10px; }
  .current { position: absolute; left: 0; top: 425px; width: 59px; height: 31px; background: #26a69a; color: #fff; padding-left: 10px; display: flex; flex-direction: column; line-height: 14px; padding-top: 2px; }
  .current span { opacity: .8; }
  .current b { font-weight: 600; }
  .usd { position: absolute; left: 13px; top: 6px; width: 37px; height: 21px; background: #131722; border: 1px solid #2a2e39; border-radius: 3px; font-size: 10.500px; display: flex; align-items: center; justify-content: center; gap: 2px; color: #d1d4dc; }

  .timerow { height: 29px; border-top: 1px solid #2a2e39; border-bottom: 1px solid #2a2e39; display: flex; flex: none; }
  .timescale { width: 1750px; position: relative; flex: none; }
  .time { position: absolute; top: 6px; width: 40px; margin-left: -20px; text-align: center; font-size: 11.500px; line-height: 14px; }
  .hour { color: #d1d4dc; font-weight: 500; }
  .corner { width: 64px; border-left: 1px solid #2a2e39; display: flex; align-items: center; padding-left: 24px; flex: none; }

  .rangebar { flex: 1; display: flex; align-items: center; padding-left: 16px; font-size: 12.200px; }
  .ranges { display: flex; gap: 14.500px; }
  .s-r { margin-left: 17px; }
  .calgo { margin-left: 17px; }
  .rangeright { margin-left: auto; display: flex; align-items: center; padding-right: 11px; color: #d1d4dc; }
  .clock { margin-right: 17px; font-size: 13.500px; }
  .opt { font-size: 13px; }
  .pct { margin-left: 15px; }
  .lg { margin-left: 19px; margin-right: 15px; }

  .panel { flex: 1; background: #131722; border-radius: 4px 4px 0 0; display: flex; font-size: 13.200px; line-height: 36px; }
  .ptab { display: flex; align-items: center; padding: 0 16.500px 2px; border-right: 1px solid #2a2e39; white-space: nowrap; }
  .crypto { padding-left: 16px; padding-right: 5px; gap: 9.500px; }
  .panelright { margin-left: auto; display: flex; align-items: center; gap: 18px; padding-right: 16px; }

  .railgroup { border-bottom: 1px solid #2a2e39; flex: none; }
  .rg-a { height: 357px; }
  .rg-b { padding: 7px 0 0; height: 263px; }
  .rg-c { border: 0; padding-top: 4px; }
  .rt { height: 50px; display: flex; align-items: center; justify-content: center; position: relative; }
  .rt svg { overflow: visible; }
  .rt-s { height: 52px; }
  .railbottom { margin-top: auto; }
  .b-r { width: 21px; height: 15px; left: 20px; top: 6px; border-radius: 8px; font-size: 12px; }
  .dot { position: absolute; width: 14px; height: 14px; border-radius: 50%; background: #f7445f; left: 27px; top: 7px; }

  .taskbar { height: 40px; background: #e2e2e2; display: flex; align-items: center; flex: none; color: #111; font-size: 13.500px; }
  .winlogo { margin-left: 16px; }
  .search { margin-left: 16px; width: 343px; height: 38px; background: #fff; display: flex; align-items: center; padding-left: 11px; gap: 11px; font-size: 14px; color: #222; border: 1px solid #d8d8d8; }
  .tasks { display: flex; margin-left: 7px; }
  .task { width: 48.500px; height: 40px; display: flex; align-items: center; justify-content: center; border-bottom: 2px solid transparent; }
  .task:nth-child(5), .task:nth-child(6), .task:nth-child(7) { border-bottom-color: #3c3f46; }
  .active { background: #f4f4f4; }
  .tray { margin-left: auto; display: flex; align-items: center; height: 40px; position: relative; padding-right: 25px; }
  .weather { margin-right: 8px; }
  .temp { margin-right: 9px; }
  .cond { margin-right: 17px; }
  .odrive { margin-left: 10px; }
  .spk { margin-left: 7.500px; }
  .wifi { margin-left: 11.500px; }
  .datetime { display: flex; flex-direction: column; align-items: center; margin-left: 4px; font-size: 11.500px; line-height: 17px; width: 64px; }
  .notif { margin-left: 12px; }

  .activate { position: absolute; left: 1599px; top: 945px; color: rgba(255,255,255,.36); pointer-events: none; }
  .a1 { font-size: 19px; line-height: 26px; }
  .a2 { font-size: 14.300px; line-height: 20px; }
</style>
